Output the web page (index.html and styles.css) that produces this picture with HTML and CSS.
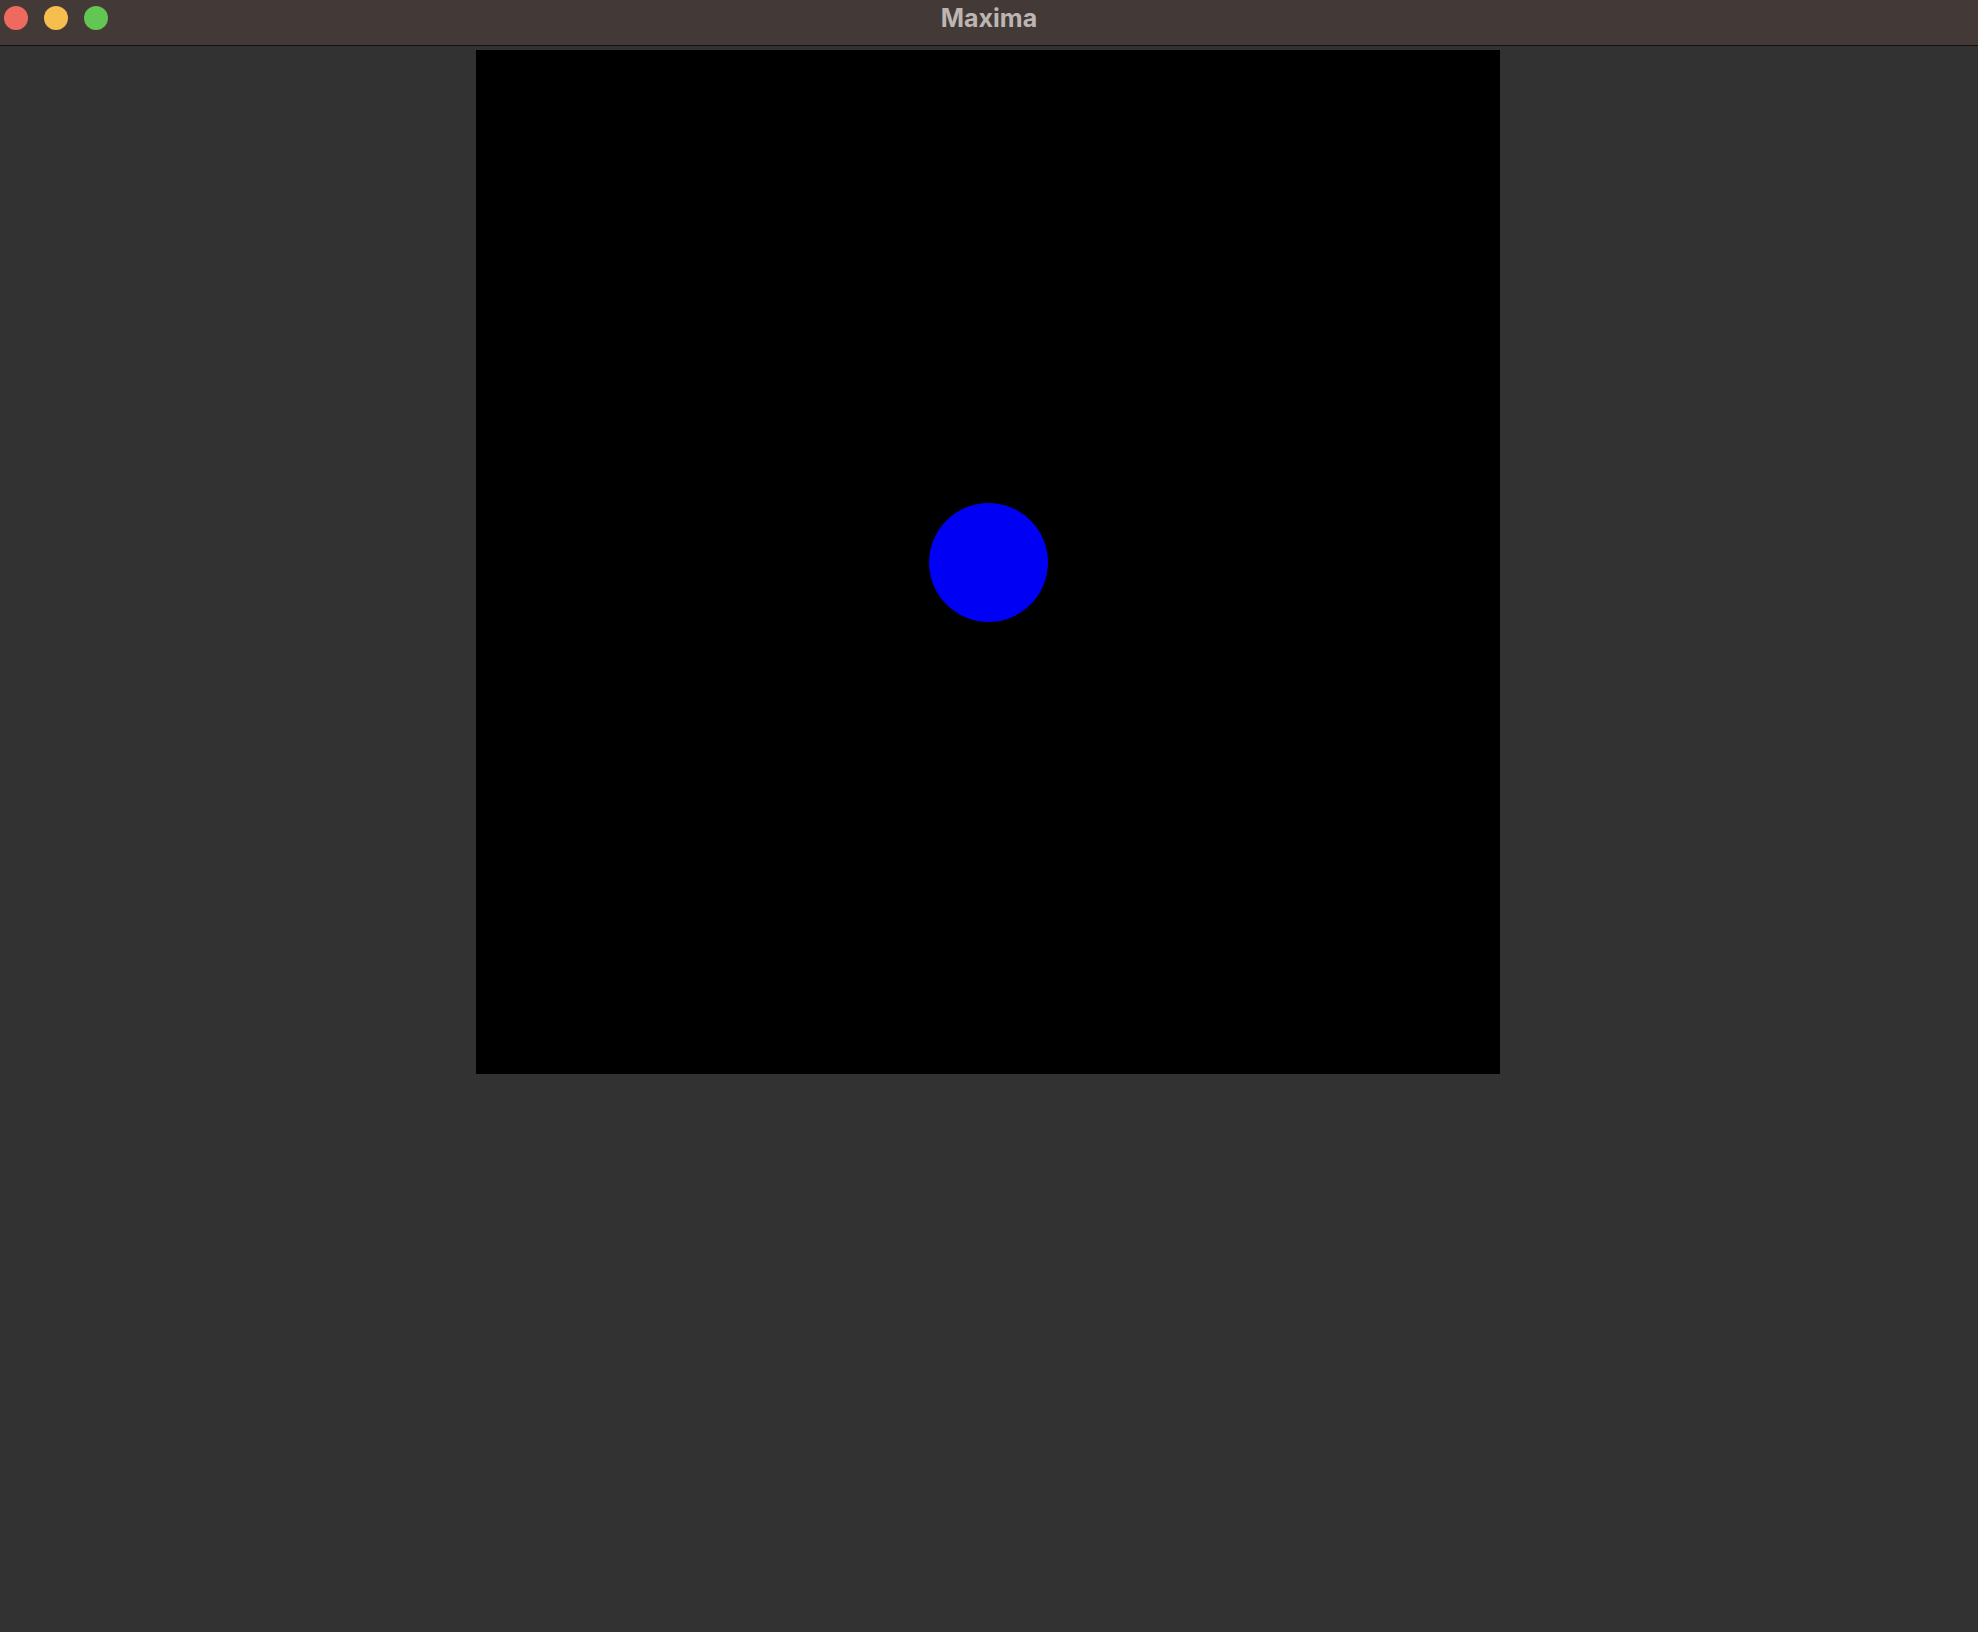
FILE: index.html
```html
<!DOCTYPE html>
<html>
<head>
<meta charset="utf-8">
<title>Maxima</title>
<link rel="stylesheet" href="styles.css">
</head>
<body>
<div class="window">
  <div class="titlebar">
    <div class="lights">
      <span class="light red"></span>
      <span class="light yellow"></span>
      <span class="light green"></span>
    </div>
    <div class="title">Maxima</div>
  </div>
  <div class="content">
    <div class="canvas">
      <div class="ball"></div>
    </div>
  </div>
</div>
</body>
</html>
```
FILE: styles.css
```css
html, body {
  margin: 0;
  padding: 0;
  height: 100%;
  background: #323232;
}
.window {
  display: flex;
  flex-direction: column;
  height: 100%;
}
.titlebar {
  position: relative;
  height: 45px;
  background: #433a38;
  border-bottom: 1px solid #111;
  display: flex;
  align-items: center;
  justify-content: center;
  flex-shrink: 0;
}
.lights {
  position: absolute;
  left: 4px;
  top: 6px;
  display: flex;
  gap: 16px;
}
.light {
  width: 24px;
  height: 24px;
  border-radius: 50%;
  display: block;
}
.red { background: #ee6a5f; }
.yellow { background: #f5be4f; }
.green { background: #62c554; }
.title {
  font-family: "Inter", "Liberation Sans", sans-serif;
  font-weight: 700;
  font-size: 25px;
  color: #bdb5b3;
  margin-top: -10px;
}
.content {
  flex: 1;
  display: flex;
  justify-content: center;
  align-items: flex-start;
  padding-top: 4px;
}
.canvas {
  width: 1024px;
  height: 1024px;
  background: #000;
  display: flex;
  align-items: center;
  justify-content: center;
  margin-left: -2px;
}
.ball {
  width: 119px;
  height: 119px;
  border-radius: 50%;
  background: #0000f5;
}
```
